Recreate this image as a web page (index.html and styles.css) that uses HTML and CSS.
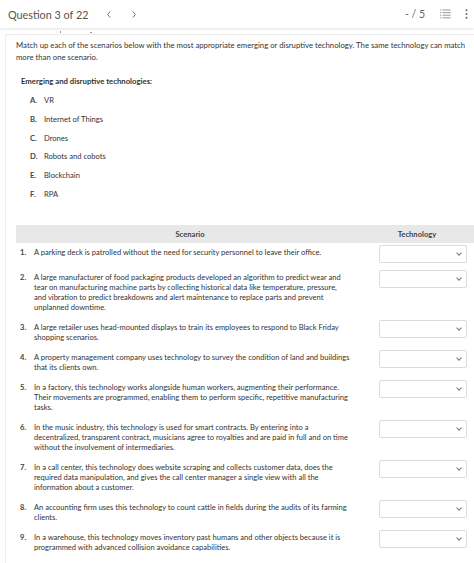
FILE: index.html
```html
<!DOCTYPE html>
<html>
<head>
<meta charset="utf-8">
<link rel="stylesheet" href="styles.css">
</head>
<body>
<header class="topbar">
  <div class="tb-left">
    <span class="qtitle">Question 3 of 22</span>
    <span class="nav nav-prev">
      <svg width="8" height="9" viewBox="0 0 8 9"><path d="M5.2 1.5 L2.6 4.5 L5.2 7.5" fill="none" stroke="#777" stroke-width="1"/></svg>
    </span>
    <span class="nav nav-next">
      <svg width="8" height="9" viewBox="0 0 8 9"><path d="M2.8 1.5 L5.4 4.5 L2.8 7.5" fill="none" stroke="#777" stroke-width="1"/></svg>
    </span>
  </div>
  <div class="tb-right">
    <span class="score">- / 5</span>
    <svg class="listicon" width="11" height="10" viewBox="0 0 11 10">
      <g fill="#9a9a9a">
        <rect x="0" y="0.5" width="1.3" height="1"/><rect x="2.5" y="0.5" width="8.2" height="1"/>
        <rect x="0" y="3.1" width="1.3" height="1"/><rect x="2.5" y="3.1" width="8.2" height="1"/>
        <rect x="0" y="5.7" width="1.3" height="1"/><rect x="2.5" y="5.7" width="8.2" height="1"/>
        <rect x="0" y="8.3" width="1.3" height="1"/><rect x="2.5" y="8.3" width="8.2" height="1"/>
      </g>
    </svg>
    <svg class="kebab" width="3" height="10" viewBox="0 0 3 10">
      <g fill="#666"><circle cx="1.5" cy="1.3" r="1"/><circle cx="1.5" cy="5" r="1"/><circle cx="1.5" cy="8.7" r="1"/></g>
    </svg>
  </div>
</header>
<div class="strip"><span class="mark m1"></span><span class="mark m2"></span></div>
<main class="content">
  <p class="intro">Match up each of the scenarios below with the most appropriate emerging or disruptive technology. The same technology can match more than one scenario.</p>
  <p class="subhead">Emerging and disruptive technologies:</p>
  <ol class="techlist">
    <li><span class="ltr">A.</span>VR</li>
    <li><span class="ltr">B.</span>Internet of Things</li>
    <li><span class="ltr">C.</span>Drones</li>
    <li><span class="ltr">D.</span>Robots and cobots</li>
    <li><span class="ltr">E.</span>Blockchain</li>
    <li><span class="ltr">F.</span>RPA</li>
  </ol>
  <div class="table">
    <div class="thead">
      <div class="th-scen">Scenario</div>
      <div class="th-tech">Technology</div>
    </div>
    <div class="row"><span class="num">1.</span><div class="txt">A parking deck is patrolled without the need for security personnel to leave their office.</div><div class="sel"><span class="chev"></span></div></div>
    <div class="row"><span class="num">2.</span><div class="txt">A large manufacturer of food packaging products developed an algorithm to predict wear and<br>tear on manufacturing machine parts by collecting historical data like temperature, pressure,<br>and vibration to predict breakdowns and alert maintenance to replace parts and prevent<br>unplanned downtime.</div><div class="sel"><span class="chev"></span></div></div>
    <div class="row"><span class="num">3.</span><div class="txt">A large retailer uses head-mounted displays to train its employees to respond to Black Friday<br>shopping scenarios.</div><div class="sel"><span class="chev"></span></div></div>
    <div class="row"><span class="num">4.</span><div class="txt">A property management company uses technology to survey the condition of land and buildings<br>that its clients own.</div><div class="sel"><span class="chev"></span></div></div>
    <div class="row"><span class="num">5.</span><div class="txt">In a factory, this technology works alongside human workers, augmenting their performance.<br>Their movements are programmed, enabling them to perform specific, repetitive manufacturing<br>tasks.</div><div class="sel"><span class="chev"></span></div></div>
    <div class="row"><span class="num">6.</span><div class="txt">In the music industry, this technology is used for smart contracts. By entering into a<br>decentralized, transparent contract, musicians agree to royalties and are paid in full and on time<br>without the involvement of intermediaries.</div><div class="sel"><span class="chev"></span></div></div>
    <div class="row"><span class="num">7.</span><div class="txt">In a call center, this technology does website scraping and collects customer data, does the<br>required data manipulation, and gives the call center manager a single view with all the<br>information about a customer.</div><div class="sel"><span class="chev"></span></div></div>
    <div class="row"><span class="num">8.</span><div class="txt">An accounting firm uses this technology to count cattle in fields during the audits of its farming<br>clients.</div><div class="sel"><span class="chev"></span></div></div>
    <div class="row"><span class="num">9.</span><div class="txt">In a warehouse, this technology moves inventory past humans and other objects because it is<br>programmed with advanced collision avoidance capabilities.</div><div class="sel"><span class="chev"></span></div></div>
  </div>
</main>
</body>
</html>
```
FILE: styles.css
```css
* { box-sizing: border-box; }
html, body { margin: 0; padding: 0; background: #fff; }
body { font-family: Lato, "Open Sans", sans-serif; color: #333; overflow: hidden; }

.topbar {
  height: 28px;
  display: flex;
  align-items: center;
  justify-content: space-between;
  padding: 0 6px 0 8px;
  background: #fff;
  box-shadow: 0 1px 3px rgba(0,0,0,0.12);
  position: relative;
  z-index: 2;
}
.tb-left { display: flex; align-items: center; }
.qtitle { font-size: 10.8px; color: #555; }
.nav { display: inline-flex; }
.nav-prev { margin-left: 17px; }
.nav-next { margin-left: 17px; }
.tb-right { display: flex; align-items: center; }
.score { font-size: 10.5px; color: #666; margin-right: 15px; }
.listicon { margin-right: 14px; }

.strip { height: 6px; display: flex; align-items: flex-end; padding-bottom: 1px; }
.mark { display: block; width: 1px; height: 2px; background: #999; }
.m1 { margin-left: 60px; }
.m2 { margin-left: 29px; width: 2px; height: 1px; }

.content {
  border-top: 1px solid #ececec;
  margin-left: 5px;
  border-left: 1px solid #eeeeee;
  padding: 4px 0 0 10px;
  min-height: 540px;
}
.intro {
  margin: 0;
  font-size: 7.75px;
  line-height: 12px;
  color: #333;
  padding-right: 4px;
}
.subhead {
  margin: 12px 0 0 5px;
  font-size: 7.75px;
  font-weight: bold;
  color: #333;
  line-height: 12px;
}
.techlist {
  list-style: none;
  margin: 7px 0 0 0;
  padding: 0 0 0 14px;
  font-size: 7.6px;
  color: #333;
}
.techlist li { height: 18.8px; line-height: 12px; display: flex; }
.ltr { width: 14px; font-weight: bold; color: #444; }

.table { margin-top: 18px; }
.thead {
  display: flex;
  background: #e8e8e8;
  height: 18px;
  align-items: center;
  font-size: 7.6px;
  font-weight: bold;
  color: #444;
}
.th-scen { width: 348px; text-align: center; }
.th-tech { flex: 1; text-align: center; padding-right: 4px; }
.row {
  display: flex;
  align-items: flex-start;
  padding: 5px 0 5px 0;
  font-size: 7.55px;
  line-height: 10px;
  color: #333;
}
.num { width: 18px; padding-left: 4px; font-weight: bold; color: #444; }
.txt { width: 340px; white-space: nowrap; overflow: visible; }
.sel {
  margin-left: 5px;
  flex: none;
  width: 88px;
  height: 18px;
  border: 1px solid #dcdcdc;
  border-radius: 2px;
  background: #fff;
  display: flex;
  align-items: center;
  justify-content: flex-end;
  padding-right: 5px;
  margin-top: -3px;
}
.chev {
  width: 4px; height: 4px;
  border-right: 1.1px solid #777;
  border-bottom: 1.1px solid #777;
  transform: rotate(45deg);
  margin-top: -2px;
}
```
